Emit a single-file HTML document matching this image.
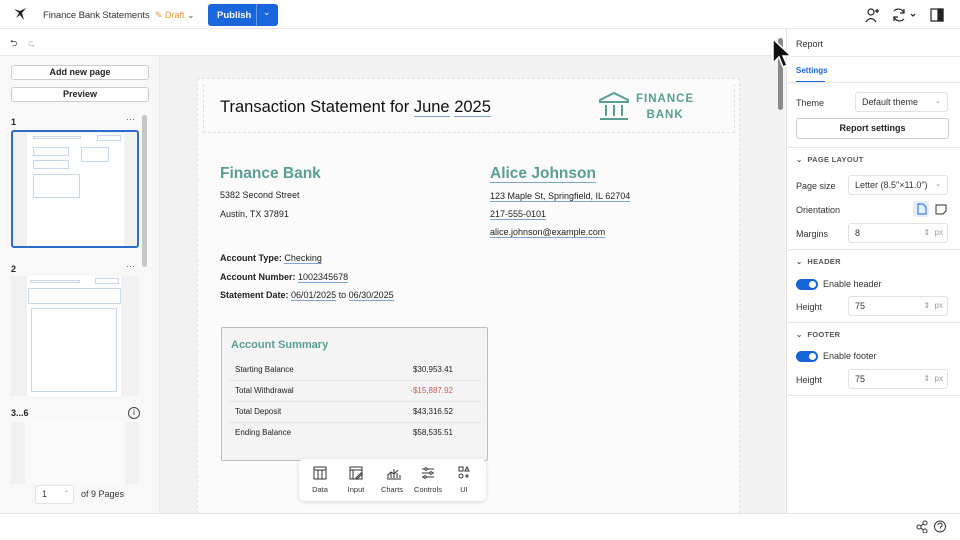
<!DOCTYPE html>
<html><head><meta charset="utf-8"><style>
*{box-sizing:border-box;margin:0;padding:0}
body{width:960px;height:540px;overflow:hidden;background:#fff;font-family:"Liberation Sans",sans-serif;color:#222;position:relative}
.a{position:absolute}
.ul{border-bottom:1px solid #7fa3d8}
.btn{position:absolute;border:1px solid #ccc;border-radius:3px;background:#fff;font-size:9px;font-weight:bold;text-align:center;color:#222}
.lbl{position:absolute;font-size:9px;color:#333}
.inp{position:absolute;border:1px solid #e2e2e2;border-radius:3px;font-size:9px;color:#333;padding-left:6px;background:#fff}
.sec{position:absolute;font-size:7.5px;font-weight:bold;color:#555;letter-spacing:.3px}
.tog{position:absolute;width:22px;height:11px;border-radius:6px;background:#1565d8}
.tog:after{content:"";position:absolute;right:2px;top:2px;width:7px;height:7px;border-radius:50%;background:#fff}
.hr{position:absolute;left:786px;width:174px;height:1px;background:#e6e6e6}
.row{position:absolute;left:229px;width:252px;font-size:8px;color:#222;border-bottom:1px solid #e4e4e4;height:21px;line-height:20px;padding-left:6px}
.row span{float:right;padding-right:28px}
.tb{position:absolute;top:0;width:36px;text-align:center;font-size:7.5px;color:#333}
</style></head><body>
<!-- top bar -->
<div class="a" style="left:0;top:0;width:960px;height:29px;border-bottom:1px solid #e6e6e6;background:#fff"></div>
<svg class="a" style="left:13px;top:7px" width="16" height="15" viewBox="0 0 16 15"><path d="M1 2 L7 4 L13 1 L9 6 L11 13 L7 8 L3 11 L6 6 Z" fill="#222"/></svg>
<div class="a" style="left:43px;top:10px;font-size:9.5px;color:#333;letter-spacing:-.1px">Finance Bank Statements</div>
<div class="a" style="left:155px;top:10px;font-size:9px;color:#e09a3a">✎ Draft <span style="color:#555">⌄</span></div>
<div class="a" style="left:208px;top:4px;width:70px;height:22px;background:#1a66dc;border-radius:3px"></div>
<div class="a" style="left:256px;top:4px;width:1px;height:22px;background:#6a9ae6"></div>
<div class="a" style="left:217px;top:10px;font-size:9.5px;color:#fff;font-weight:bold">Publish</div>
<div class="a" style="left:263px;top:7px;font-size:9px;color:#fff">⌄</div>
<svg class="a" style="left:864px;top:7px" width="90" height="16" viewBox="0 0 90 16" fill="none" stroke="#222" stroke-width="1.2"><circle cx="7" cy="5" r="3"/><path d="M2 15 Q7 8 12 15"/><path d="M13 2v4M11 4h4"/><path d="M30 4 A6 6 0 0 1 40 6 M40 12 A6 6 0 0 1 30 10"/><path d="M40 2v4h-4M30 14v-4h4"/><path d="M47 7l2 2 2-2"/><rect x="67" y="2" width="12" height="12"/><rect x="74" y="2" width="5" height="12" fill="#222"/></svg>
<!-- toolbar -->
<div class="a" style="left:0;top:29px;width:786px;height:27px;background:#fff;border-bottom:1px solid #e6e6e6"></div>
<div class="a" style="left:10px;top:36px;font-size:9px;color:#333">⮌</div>
<div class="a" style="left:28px;top:36px;font-size:9px;color:#bbb">⮎</div>
<!-- left panel -->
<div class="a" style="left:0;top:56px;width:160px;height:457px;background:#f8f8f8;border-right:1px solid #e8e8e8"></div>
<div class="btn" style="left:11px;top:65px;width:138px;height:15px;line-height:13px">Add new page</div>
<div class="btn" style="left:11px;top:87px;width:138px;height:15px;line-height:13px">Preview</div>
<div class="a" style="left:142px;top:115px;width:5px;height:152px;background:#c6c6c6;border-radius:3px"></div>
<div class="a" style="left:11px;top:117px;font-size:9px;font-weight:bold">1</div>
<div class="a" style="left:126px;top:114px;font-size:9px;color:#555">···</div>
<div class="a" style="left:11px;top:130px;width:128px;height:118px;border:2px solid #2d6bd0;border-radius:3px;background:#f1f1f1">
 <div class="a" style="left:14px;top:1px;width:97px;height:113px;background:#fff"></div>
 <div class="a" style="left:20px;top:4px;width:48px;height:3px;border:1px solid #c8d6ee"></div>
 <div class="a" style="left:84px;top:3px;width:24px;height:6px;border:1px solid #c8d6ee"></div>
 <div class="a" style="left:20px;top:15px;width:36px;height:9px;border:1px solid #c8d6ee"></div>
 <div class="a" style="left:68px;top:15px;width:28px;height:15px;border:1px solid #c8d6ee"></div>
 <div class="a" style="left:20px;top:28px;width:36px;height:9px;border:1px solid #c8d6ee"></div>
 <div class="a" style="left:20px;top:42px;width:47px;height:24px;border:1px solid #c8d6ee"></div>
</div>
<div class="a" style="left:11px;top:264px;font-size:9px;font-weight:bold">2</div>
<div class="a" style="left:126px;top:261px;font-size:9px;color:#555">···</div>
<div class="a" style="left:11px;top:276px;width:128px;height:120px;background:#f1f1f1">
 <div class="a" style="left:16px;top:0;width:94px;height:120px;background:#fff"></div>
 <div class="a" style="left:19px;top:4px;width:50px;height:3px;border:1px solid #c8d6ee"></div>
 <div class="a" style="left:84px;top:2px;width:24px;height:6px;border:1px solid #c8d6ee"></div>
 <div class="a" style="left:17px;top:12px;width:93px;height:16px;border:1px solid #c8d6ee"></div>
 <div class="a" style="left:20px;top:32px;width:86px;height:84px;border:1px solid #c8d6ee"></div>
</div>
<div class="a" style="left:11px;top:408px;font-size:9px;font-weight:bold">3...6</div>
<div class="a" style="left:128px;top:407px;width:12px;height:12px;border:1px solid #444;border-radius:50%;font-size:8px;text-align:center;line-height:10px">i</div>
<div class="a" style="left:11px;top:422px;width:128px;height:62px;background:#f1f1f1"><div class="a" style="left:14px;top:0;width:100px;height:62px;background:#fafafa"></div></div>
<div class="inp" style="left:35px;top:485px;width:39px;height:19px;line-height:17px">1<span style="float:right;padding-right:4px;font-size:6px;color:#888">⌃</span></div>
<div class="a" style="left:81px;top:489px;font-size:9px;color:#333">of 9 Pages</div>
<!-- canvas -->
<div class="a" style="left:160px;top:56px;width:626px;height:457px;background:#f2f2f2"></div>
<div class="a" style="left:778px;top:38px;width:5px;height:72px;background:#8a8a8a;border-radius:3px"></div>
<div class="a" style="left:197px;top:78px;width:543px;height:440px;background:#fbfbfc;border:1px dashed #e2e2e2"></div>
<div class="a" style="left:203px;top:84px;width:532px;height:49px;border:1px dashed #e0e0e0;border-top:none"></div>
<div class="a" style="left:220px;top:98px;font-size:16.5px;color:#111">Transaction Statement for <span class="ul">June</span> <span class="ul">2025</span></div>
<svg class="a" style="left:598px;top:91px" width="32" height="31" viewBox="0 0 32 31" fill="#5a9e93"><path d="M2 9 L16 2 L30 9 L30 11 L2 11Z" fill="none" stroke="#5a9e93" stroke-width="2"/><rect x="7" y="14" width="2" height="11"/><rect x="15" y="14" width="2" height="11"/><rect x="23" y="14" width="2" height="11"/><rect x="2" y="27" width="28" height="2"/></svg>
<div class="a" style="left:636px;top:91px;font-size:11.5px;font-weight:bold;color:#5a9e93;letter-spacing:1px;text-align:center;line-height:16px">FINANCE<br>BANK</div>
<div class="a" style="left:220px;top:165px;font-size:15.5px;font-weight:bold;color:#5a9e93">Finance Bank</div>
<div class="a" style="left:220px;top:186px;font-size:9px;line-height:18.5px">5382 Second Street<br>Austin, TX 37891</div>
<div class="a" style="left:490px;top:165px;font-size:15.5px;font-weight:bold;color:#5a9e93"><span class="ul" style="border-bottom-width:1.5px">Alice Johnson</span></div>
<div class="a" style="left:490px;top:187px;font-size:9px;line-height:18.2px"><span class="ul">123 Maple St, Springfield, IL 62704</span><br><span class="ul">217-555-0101</span><br><span class="ul">alice.johnson@example.com</span></div>
<div class="a" style="left:220px;top:249px;font-size:9px;line-height:18.7px"><b>Account Type:</b> <span class="ul">Checking</span><br><b>Account Number:</b> <span class="ul">1002345678</span><br><b>Statement Date:</b> <span class="ul">06/01/2025</span> to <span class="ul">06/30/2025</span></div>
<div class="a" style="left:221px;top:327px;width:267px;height:134px;background:#f4f4f4;border:1.5px solid #bdbdbd;border-radius:2px"></div>
<div class="a" style="left:231px;top:339px;font-size:11px;font-weight:bold;color:#5a9e93">Account Summary</div>
<div class="row" style="top:360px">Starting Balance<span>$30,953.41</span></div>
<div class="row" style="top:381px">Total Withdrawal<span style="color:#c85a5a">-$15,887.92</span></div>
<div class="row" style="top:402px">Total Deposit<span>$43,316.52</span></div>
<div class="row" style="top:423px;border:none">Ending Balance<span>$58,535.51</span></div>
<div class="a" style="left:299px;top:459px;width:187px;height:42px;background:#fff;border-radius:5px;box-shadow:0 1px 4px rgba(0,0,0,.15)">
 <svg class="a" style="left:14px;top:7px" width="160" height="14" viewBox="0 0 160 14" fill="none" stroke="#333" stroke-width="1"><rect x="1" y="1" width="12" height="12"/><path d="M1 4h12M5 4v9M9 4v9"/><rect x="37" y="1" width="12" height="12"/><path d="M37 4h12M40 4v9M43 12l5-5 1 1-5 5z"/><path d="M74 13h14M75 12v-4M78 12v-6M81 12v-9M84 12v-5M87 12v-3M75 9l3-3 3 2 4-4"/><path d="M109 3h12M109 7h12M109 11h12"/><circle cx="113" cy="3" r="1.2" fill="#fff"/><circle cx="118" cy="7" r="1.2" fill="#fff"/><circle cx="112" cy="11" r="1.2" fill="#fff"/><rect x="146" y="1" width="4" height="4"/><path d="M152 5l2-4 2 4z"/><circle cx="148" cy="10" r="2"/><path d="M154 8v4M152 10h4"/></svg>
 <div class="tb" style="left:3px;top:26px">Data</div><div class="tb" style="left:39px;top:26px">Input</div><div class="tb" style="left:75px;top:26px">Charts</div><div class="tb" style="left:111px;top:26px">Controls</div><div class="tb" style="left:147px;top:26px">UI</div>
</div>
<!-- right panel -->
<div class="a" style="left:786px;top:29px;width:174px;height:484px;background:#fff;border-left:1px solid #e3e3e3"></div>
<div class="lbl" style="left:796px;top:39px">Report</div>
<div class="hr" style="top:56px"></div>
<div class="a" style="left:796px;top:66px;font-size:8px;font-weight:bold;color:#1a66dc">Settings</div>
<div class="a" style="left:796px;top:81px;width:29px;height:2px;background:#1a66dc"></div>
<div class="hr" style="top:82px"></div>
<div class="lbl" style="left:796px;top:98px">Theme</div>
<div class="inp" style="left:855px;top:92px;width:93px;height:20px;line-height:18px">Default theme<span style="float:right;padding-right:6px;font-size:7px;color:#888">⌄</span></div>
<div class="btn" style="left:796px;top:118px;width:153px;height:21px;line-height:19px">Report settings</div>
<div class="hr" style="top:147px"></div>
<div class="sec" style="left:796px;top:155px">⌄ &nbsp;PAGE LAYOUT</div>
<div class="lbl" style="left:796px;top:181px">Page size</div>
<div class="inp" style="left:848px;top:175px;width:100px;height:20px;line-height:18px">Letter (8.5"×11.0")<span style="float:right;padding-right:6px;font-size:7px;color:#888">⌄</span></div>
<div class="lbl" style="left:796px;top:205px">Orientation</div>
<div class="a" style="left:913px;top:201px;width:16px;height:16px;background:#e4eefc;border-radius:3px"></div>
<svg class="a" style="left:916px;top:203px" width="32" height="12" viewBox="0 0 32 12" fill="none" stroke="#1a66dc" stroke-width="1"><path d="M2 1h5l3 3v7H2z"/><path d="M20 2h10v6l-3 3h-7z" stroke="#333"/></svg>
<div class="lbl" style="left:796px;top:229px">Margins</div>
<div class="inp" style="left:848px;top:223px;width:100px;height:20px;line-height:18px">8<span style="float:right;padding-right:4px;color:#999;font-size:8px">⇕ &nbsp;px</span></div>
<div class="hr" style="top:249px"></div>
<div class="sec" style="left:796px;top:257px">⌄ &nbsp;HEADER</div>
<div class="tog" style="left:796px;top:279px"></div>
<div class="lbl" style="left:823px;top:279px">Enable header</div>
<div class="lbl" style="left:796px;top:302px">Height</div>
<div class="inp" style="left:848px;top:296px;width:100px;height:20px;line-height:18px">75<span style="float:right;padding-right:4px;color:#999;font-size:8px">⇕ &nbsp;px</span></div>
<div class="hr" style="top:322px"></div>
<div class="sec" style="left:796px;top:330px">⌄ &nbsp;FOOTER</div>
<div class="tog" style="left:796px;top:351px"></div>
<div class="lbl" style="left:823px;top:351px">Enable footer</div>
<div class="lbl" style="left:796px;top:375px">Height</div>
<div class="inp" style="left:848px;top:369px;width:100px;height:20px;line-height:18px">75<span style="float:right;padding-right:4px;color:#999;font-size:8px">⇕ &nbsp;px</span></div>
<div class="hr" style="top:395px"></div>
<!-- bottom bar -->
<div class="a" style="left:0;top:513px;width:960px;height:27px;background:#fff;border-top:1px solid #e3e3e3"></div>
<svg class="a" style="left:916px;top:520px" width="32" height="13" viewBox="0 0 32 13" fill="none" stroke="#333" stroke-width="1"><circle cx="3" cy="7" r="2"/><circle cx="9" cy="3" r="2"/><circle cx="9" cy="11" r="2"/><path d="M5 6l2-2M5 8l2 2"/><circle cx="24" cy="6.5" r="5.5"/><path d="M22 5a2 2 0 1 1 2.5 2v1.5M24 10v.5"/></svg>
<!-- cursor -->
<svg class="a" style="left:771px;top:37px" width="22" height="34" viewBox="0 0 22 34"><path d="M2 2 L2 26 L8 20 L12 30 L16 28 L12 19 L20 19 Z" fill="#111" stroke="#fff" stroke-width="1.5"/></svg>
</body></html>
